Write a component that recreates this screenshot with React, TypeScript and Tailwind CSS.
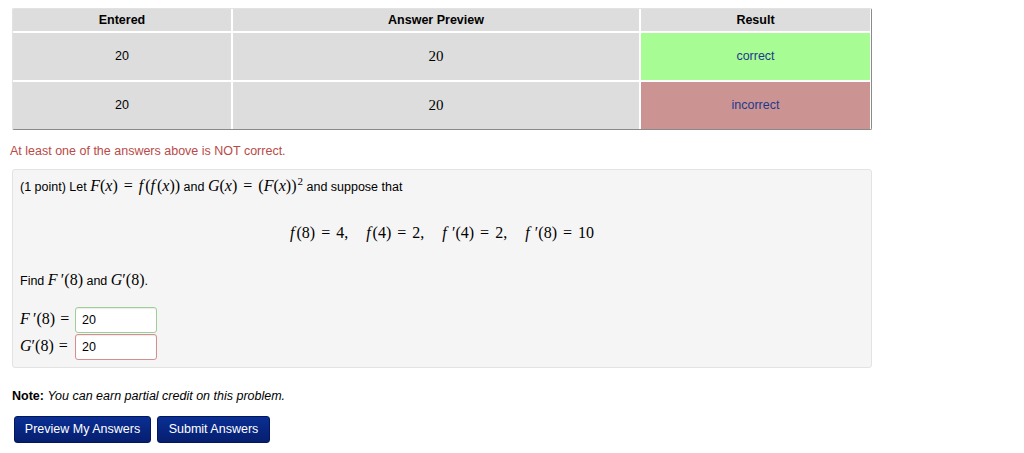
import React from "react";

function I({ children, f }: { children: React.ReactNode; f?: boolean }) {
  return <i className={f ? "italic pr-[2px]" : "italic"}>{children}</i>;
}

function Eq() {
  return <span className="mx-[6px]">=</span>;
}

function M({ children }: { children: React.ReactNode }) {
  return (
    <span className="font-['Liberation_Serif',serif] text-[16px] leading-[16px] whitespace-nowrap">
      {children}
    </span>
  );
}

export default function App() {
  return (
    <div className="w-[1024px] h-[453px] bg-white font-['Liberation_Sans',Arial,sans-serif] text-[12.5px] text-black relative">
      <div className="pt-[8px] pl-[12px]">
        {/* Results table */}
        <div className="w-[860px] border border-t-[#e2e2e2] border-l-[#e2e2e2] border-r-[#8a8a8a] border-b-[#8a8a8a] rounded-[2px]">
          <div className="grid grid-cols-[218px_406px_229px] grid-rows-[22px_47px_47px] gap-[2px]">
            <div className="bg-[#dddddd] flex items-center justify-center font-bold">Entered</div>
            <div className="bg-[#dddddd] flex items-center justify-center font-bold">Answer Preview</div>
            <div className="bg-[#dddddd] flex items-center justify-center font-bold">Result</div>

            <div className="bg-[#dddddd] flex items-center justify-center">20</div>
            <div className="bg-[#dddddd] flex items-center justify-center">
              <span className="font-['Liberation_Serif',serif] text-[15px]">20</span>
            </div>
            <div className="bg-[#a8fc94] flex items-center justify-center text-[#1c3a8c]">correct</div>

            <div className="bg-[#dddddd] flex items-center justify-center">20</div>
            <div className="bg-[#dddddd] flex items-center justify-center">
              <span className="font-['Liberation_Serif',serif] text-[15px]">20</span>
            </div>
            <div className="bg-[#cc9393] flex items-center justify-center text-[#1c3a8c]">incorrect</div>
          </div>
        </div>

        {/* Message */}
        <div className="mt-[13px] -ml-[2px] text-[#b94a48] leading-[16px]">
          At least one of the answers above is NOT correct.
        </div>

        {/* Problem box */}
        <div className="mt-[10px] w-[860px] h-[199px] bg-[#f5f5f5] border border-[#e3e3e3] rounded-[3px] px-[7px] pt-[7px]">
          <div className="leading-[20px]">
            (1 point) Let{" "}
            <M>
              <I>F</I>(<I>x</I>)<Eq /><I f>f</I>(<I f>f</I>(<I>x</I>))
            </M>{" "}
            and{" "}
            <M>
              <I>G</I>(<I>x</I>)<Eq />(<I>F</I>(<I>x</I>))
              <span className="text-[11px] relative -top-[6px] ml-[1px]">2</span>
            </M>{" "}
            and suppose that
          </div>

          <div className="mt-[27px] leading-[20px] text-center">
            <M>
              <I f>f</I>(8)<Eq />4,
              <span className="inline-block w-[18px]" />
              <I f>f</I>(4)<Eq />2,
              <span className="inline-block w-[18px]" />
              <I f>f</I>&thinsp;′(4)<Eq />2,
              <span className="inline-block w-[18px]" />
              <I f>f</I>&thinsp;′(8)<Eq />10
            </M>
          </div>

          <div className="mt-[27px] leading-[20px]">
            Find{" "}
            <M>
              <I>F</I>&thinsp;′(8)
            </M>{" "}
            and{" "}
            <M>
              <I>G</I>′(8)
            </M>
            .
          </div>

          <div className="mt-[16px] flex flex-col gap-[1px]">
            <div className="flex items-center">
              <span className="w-[55px]">
                <M>
                  <I>F</I>&thinsp;′(8)<span className="ml-[5px]">=</span>
                </M>
              </span>
              <div className="w-[82px] h-[26px] bg-white border border-[#9fcf98] rounded-[3px] flex items-center pl-[6px] text-[12.5px] shadow-[inset_0_1px_1px_rgba(0,0,0,0.08)]">
                20
              </div>
            </div>
            <div className="flex items-center">
              <span className="w-[55px]">
                <M>
                  <I>G</I>′(8)<span className="ml-[5px]">=</span>
                </M>
              </span>
              <div className="w-[82px] h-[26px] bg-white border border-[#d48e8e] rounded-[3px] flex items-center pl-[6px] text-[12.5px] shadow-[inset_0_1px_1px_rgba(0,0,0,0.08)]">
                20
              </div>
            </div>
          </div>
        </div>

        {/* Note */}
        <div className="mt-[20px] leading-[16px]">
          <b>Note:</b> <i>You can earn partial credit on this problem.</i>
        </div>

        {/* Buttons */}
        <div className="mt-[12px] ml-[2px] flex gap-[6px]">
          <button className="h-[27px] w-[137px] rounded-[3px] border border-[#04175a] bg-gradient-to-b from-[#0a2f94] to-[#061e6e] text-white text-[12.5px] font-['Liberation_Sans',Arial,sans-serif]">
            Preview My Answers
          </button>
          <button className="h-[27px] w-[113px] rounded-[3px] border border-[#04175a] bg-gradient-to-b from-[#0a2f94] to-[#061e6e] text-white text-[12.5px] font-['Liberation_Sans',Arial,sans-serif]">
            Submit Answers
          </button>
        </div>
      </div>
    </div>
  );
}
